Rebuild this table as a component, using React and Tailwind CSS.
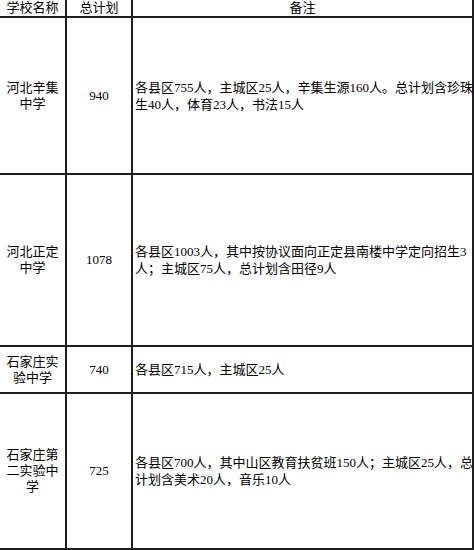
const rows = [
  {
    name: "河北辛集中学",
    total: "940",
    note: ["各县区755人，主城区25人，辛集生源160人。总计划含珍珠", "生40人，体育23人，书法15人"],
  },
  {
    name: "河北正定中学",
    total: "1078",
    note: ["各县区1003人，其中按协议面向正定县南楼中学定向招生3", "人；主城区75人，总计划含田径9人"],
  },
  {
    name: "石家庄实验中学",
    total: "740",
    note: ["各县区715人，主城区25人"],
  },
  {
    name: "石家庄第二实验中学",
    total: "725",
    note: ["各县区700人，其中山区教育扶贫班150人；主城区25人，总", "计划含美术20人，音乐10人"],
  },
];

const cell = "border-r-2 border-b-2 border-[#1e1e1e] flex items-center";

export default function App() {
  return (
    <div
      className="w-[474px] h-[550px] bg-white text-black text-[13px] overflow-hidden"
      style={{ fontFamily: '"Liberation Serif", "Noto Sans CJK SC", serif' }}
    >
      <div className="grid grid-cols-[67px_66px_341px] grid-rows-[18px_157px_172px_47px_156px]">
        {/* 表头 */}
        <div className={`${cell} justify-center leading-[16px]`}>学校名称</div>
        <div className={`${cell} justify-center leading-[16px]`}>总计划</div>
        <div className={`${cell} justify-center leading-[16px]`}>备注</div>

        {rows.map((r) => (
          <div key={r.name} className="contents">
            <div className={`${cell} justify-center text-center px-[4px] leading-[16px]`}>
              {r.name}
            </div>
            <div className={`${cell} justify-center`}>{r.total}</div>
            <div className={`${cell} pl-[2px] leading-[17px]`}>
              <div>
                {r.note.map((line) => (
                  <div key={line} className="whitespace-nowrap">{line}</div>
                ))}
              </div>
            </div>
          </div>
        ))}
      </div>
    </div>
  );
}
